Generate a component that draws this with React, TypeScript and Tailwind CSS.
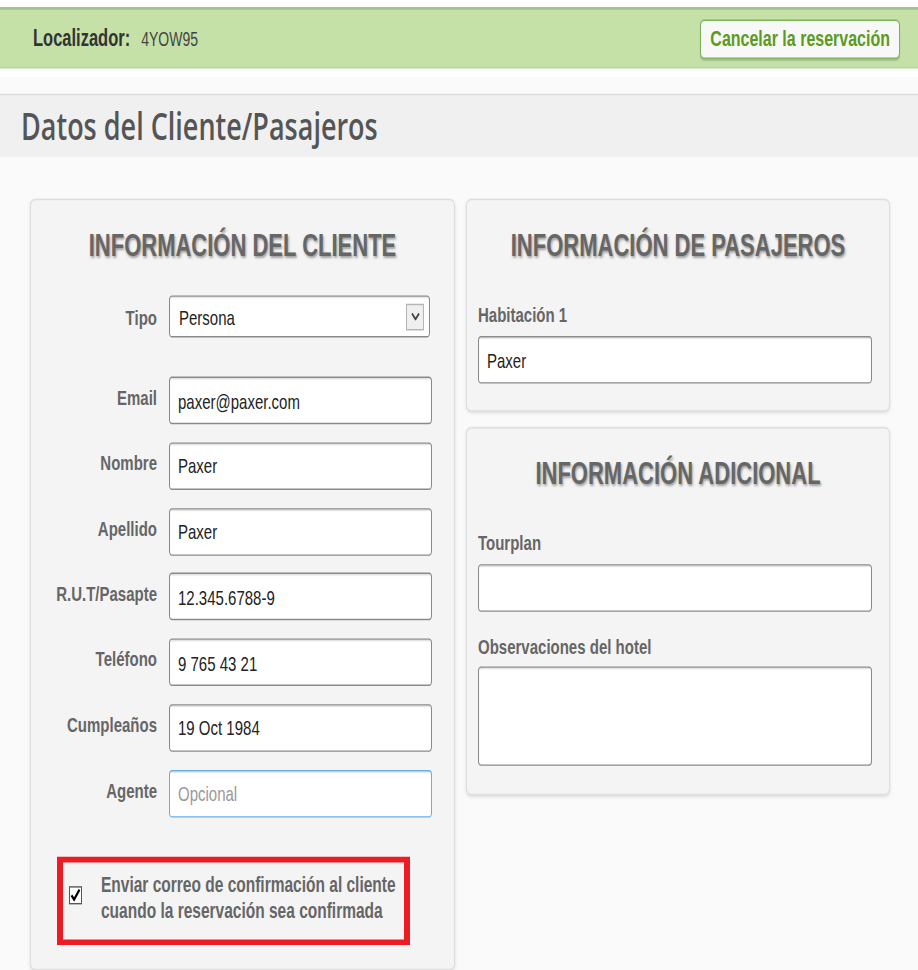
const labelCls = "font-bold text-[15px] leading-[18px] text-[#666]"
const inputCls =
  "block h-[34px] rounded-[3px] border border-[#8a8a8a] bg-white pl-[8px] text-[15px] text-[#222] shadow-[inset_0_1px_1px_rgba(0,0,0,0.12)] outline-none"
const headingCls =
  "text-center text-[22px] leading-[26px] font-bold text-[#666] [text-shadow:1px_1px_2px_rgba(0,0,0,0.35)]"

function Row({ label, value, placeholder, focus }: { label: string; value?: string; placeholder?: string; focus?: boolean }) {
  return (
    <div className="flex items-start gap-[12px]">
      <label className={`${labelCls} w-[126px] pt-[6px] text-right`}>{label}</label>
      <input
        readOnly
        value={value ?? ""}
        placeholder={placeholder}
        className={`${inputCls} w-[263px] placeholder:text-[#999] ${focus ? "border-[#66afe9] shadow-[0_0_3px_rgba(102,175,233,0.6)]" : ""}`}
      />
    </div>
  )
}

export default function App() {
  return (
    <div className="min-h-screen overflow-hidden bg-[#fafafa]">
      <div className="origin-top scale-y-[1.4] font-['Liberation_Sans',Arial,sans-serif]">
        <div className="h-[5px] bg-white" />

        {/* barra localizador */}
        <div className="flex h-[44px] items-center justify-between border-t-2 border-b border-t-[#9dc78e] border-b-[#aed39e] bg-[#c5e1a8] pl-[33px] pr-[18px]">
          <div className="flex items-baseline gap-[11px]">
            <span className="text-[16.5px] font-bold text-[#333]">Localizador:</span>
            <span className="text-[14px] text-[#444]">4YOW95</span>
          </div>
          <button className="h-[28px] rounded-[4px] border border-[#7ab35a] bg-[#f8f8f8] px-[9px] text-[16px] font-bold text-[#5b9b20] shadow-[0_1px_1px_rgba(0,0,0,0.15)]">
            Cancelar la reservación
          </button>
        </div>

        <div className="h-[6px] bg-white" />
        <div className="h-[12px] bg-[#fafafa]" />

        <div className="flex h-[45px] items-center border-t border-[#dcdcdc] bg-[#f0f0f0] pl-[21px]">
          <h1 className="font-['Open_Sans',sans-serif] text-[27px] font-semibold text-[#555]">
            Datos del Cliente/Pasajeros
          </h1>
        </div>

        <div className="flex gap-[11px] pl-[30px] pt-[30px]">
          {/* cliente */}
          <div className="w-[425px] rounded-[5px] border border-[#dedede] bg-[#f4f4f4] pb-[17px] pt-[20px] shadow-[0_1px_3px_rgba(0,0,0,0.12)]">
            <h3 className={headingCls}>INFORMACIÓN DEL CLIENTE</h3>

            <div className="mt-[22px] flex items-start gap-[12px]">
              <label className={`${labelCls} w-[126px] pt-[7px] text-right`}>Tipo</label>
              <div className="flex h-[30px] w-[261px] items-center justify-between rounded-[3px] border border-[#8a8a8a] bg-white pl-[9px] pr-[5px] shadow-[inset_0_1px_1px_rgba(0,0,0,0.1)]">
                <span className="pt-[2px] text-[15px] text-[#222]">Persona</span>
                <span className="flex h-[19px] w-[18px] items-center justify-center border border-[#b5b5b5] bg-[#efefef]">
                  <svg width="9" height="6" viewBox="0 0 9 6">
                    <path d="M1 1l3.5 4L8 1" fill="none" stroke="#444" strokeWidth="1.6" />
                  </svg>
                </span>
              </div>
            </div>

            <div className="mt-[28px] flex flex-col gap-[12.8px]">
              <Row label="Email" value="paxer@paxer.com" />
              <Row label="Nombre" value="Paxer" />
              <Row label="Apellido" value="Paxer" />
              <Row label="R.U.T/Pasapte" value="12.345.6788-9" />
              <Row label="Teléfono" value="9 765 43 21" />
              <Row label="Cumpleaños" value="19 Oct 1984" />
              <Row label="Agente" placeholder="Opcional" focus />
            </div>

            <div className="ml-[26px] mt-[28px] flex h-[63px] w-[353px] items-start gap-[19px] border-x-[6px] border-y-[4px] border-[#ed1c24] pl-[6px] pt-[6px]">
              <span className="mt-[11px] flex h-[13px] w-[13px] shrink-0 items-center justify-center border border-[#555] bg-white">
                <svg width="11" height="11" viewBox="0 0 11 11">
                  <path d="M1.5 5.5l2.6 3L9.5 1.5" fill="none" stroke="#000" strokeWidth="2" />
                </svg>
              </span>
              <p className="text-[15.5px] font-bold leading-[19px] text-[#666]">
                Enviar correo de confirmación al cliente
                <br />
                cuando la reservación sea confirmada
              </p>
            </div>
          </div>

          <div className="flex w-[424px] flex-col gap-[11px]">
            {/* pasajeros */}
            <div className="h-[152px] rounded-[5px] border border-[#dedede] bg-[#f4f4f4] px-[11px] pt-[20px] shadow-[0_1px_3px_rgba(0,0,0,0.12)]">
              <h3 className={headingCls}>INFORMACIÓN DE PASAJEROS</h3>
              <div className={`${labelCls} mt-[27px]`}>Habitación 1</div>
              <input readOnly value="Paxer" className={`${inputCls} mt-[6px] w-[394px]`} />
            </div>

            {/* adicional */}
            <div className="h-[263px] rounded-[5px] border border-[#dedede] bg-[#f4f4f4] px-[11px] pt-[20px] shadow-[0_1px_3px_rgba(0,0,0,0.12)]">
              <h3 className={headingCls}>INFORMACIÓN ADICIONAL</h3>
              <div className={`${labelCls} mt-[27px]`}>Tourplan</div>
              <input readOnly value="" className={`${inputCls} mt-[6px] w-[394px]`} />
              <div className={`${labelCls} mt-[16px]`}>Observaciones del hotel</div>
              <textarea
                readOnly
                className="mt-[5px] block h-[71px] w-[394px] resize-none rounded-[3px] border border-[#8a8a8a] bg-white shadow-[inset_0_1px_1px_rgba(0,0,0,0.12)] outline-none"
              />
            </div>
          </div>
        </div>
      </div>
    </div>
  )
}
